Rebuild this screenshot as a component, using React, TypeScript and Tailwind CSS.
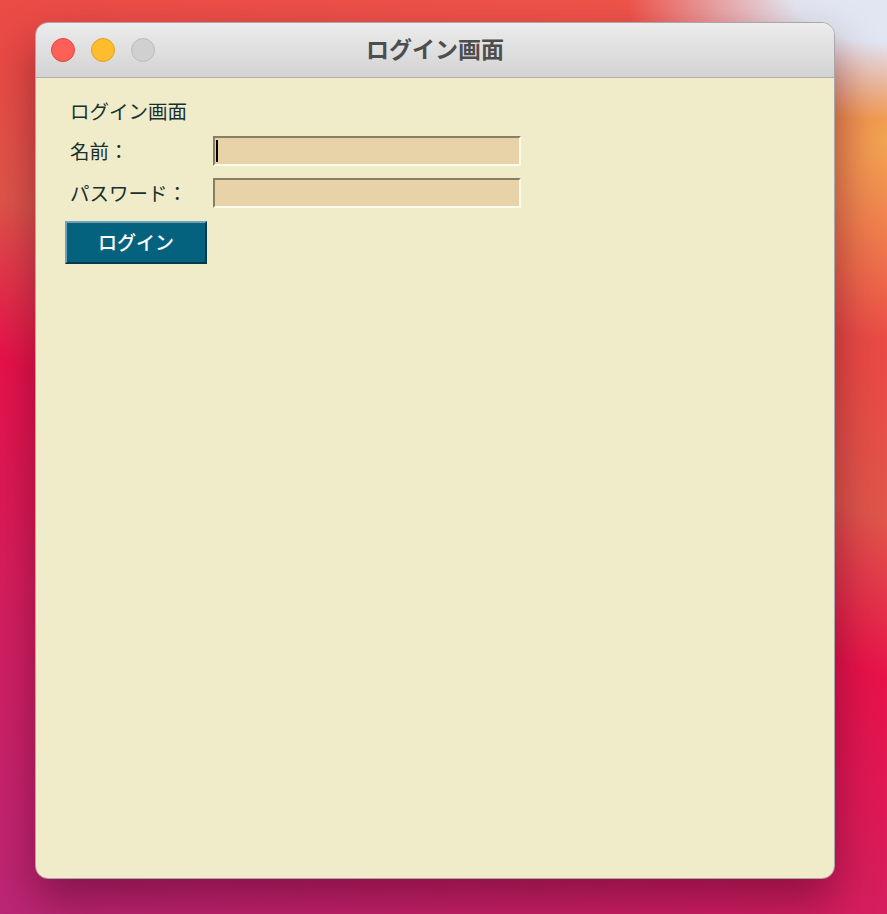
import { useState } from "react";

// ログイン画面 (macOS window over the Big Sur wallpaper)
export default function App() {
  const [name, setName] = useState("");
  const [password, setPassword] = useState("");

  return (
    <div
      className="relative w-[887px] h-[914px] overflow-hidden pt-[22px] pl-[35px] bg-[radial-gradient(ellipse_260px_120px_at_100%_0%,#e2e6f2_0%,#e2e6f2_35%,rgba(240,180,150,0)_100%),radial-gradient(ellipse_180px_200px_at_100%_140px,#f2a552_0%,rgba(240,150,80,0.6)_50%,rgba(232,80,70,0)_100%),linear-gradient(200deg,#f0574c_0%,#ea4a45_30%,#e0564a_42%,#e8124a_55%,#d81d5c_72%,#bc2676_100%)]"
      style={{ fontFamily: '"Noto Sans CJK JP", "Noto Sans", sans-serif' }}
    >
      <div className="w-[800px] h-[857px] rounded-[13px] overflow-hidden border border-[#a8a8a8] shadow-[0_22px_45px_rgba(60,0,30,0.45)] flex flex-col">
        {/* TITLE BAR */}
        <div className="relative h-[55px] shrink-0 bg-gradient-to-b from-[#ececec] to-[#d3d3d3] border-b border-[#b0b0b0] flex items-center">
          <div className="flex items-center gap-[16px] pl-[15px]">
            <span className="w-[24px] h-[24px] rounded-full bg-[#fe5f57] border border-[#e2463f]" />
            <span className="w-[24px] h-[24px] rounded-full bg-[#febc2e] border border-[#dea123]" />
            <span className="w-[24px] h-[24px] rounded-full bg-[#d0d0d0] border border-[#bdbdbd]" />
          </div>
          <div className="absolute inset-0 pb-[3px] flex items-center justify-center text-[23px] font-bold text-[#4d4d4d] pointer-events-none">
            ログイン画面
          </div>
        </div>

        {/* CONTENT */}
        <div className="flex-1 bg-[#f0ecca] pt-[19px] pl-[29px] text-[#17302f] text-[19.5px]">
          <div className="pl-[5px] h-[28px] leading-[28px]">ログイン画面</div>

          <div className="flex flex-col gap-[12px] mt-[11px]">
            <div className="flex items-center h-[30px]">
              <label className="pl-[5px] w-[148px]">名前：</label>
              <div className="relative">
                <input
                  value={name}
                  onChange={(e) => setName(e.target.value)}
                  className="w-[308px] h-[30px] bg-[#e8d3a9] border-2 border-t-[#8a7d62] border-l-[#8a7d62] border-b-[#fffbea] border-r-[#fffbea] outline-none px-1 text-[17px]"
                />
                <span className="absolute left-[3px] top-[4px] w-[2px] h-[22px] bg-black" />
              </div>
            </div>

            <div className="flex items-center h-[30px]">
              <label className="pl-[5px] w-[148px]">パスワード：</label>
              <input
                type="password"
                value={password}
                onChange={(e) => setPassword(e.target.value)}
                className="w-[308px] h-[30px] bg-[#e8d3a9] border-2 border-t-[#8a7d62] border-l-[#8a7d62] border-b-[#fffbea] border-r-[#fffbea] outline-none px-1 text-[17px]"
              />
            </div>
          </div>

          <button className="mt-[13px] w-[142px] h-[43px] bg-[#04627f] text-white text-[19px] font-medium border-2 border-t-[#6fa3ba] border-l-[#6fa3ba] border-b-[#023a4c] border-r-[#023a4c] flex items-center justify-center">
            ログイン
          </button>
        </div>
      </div>
    </div>
  );
}
